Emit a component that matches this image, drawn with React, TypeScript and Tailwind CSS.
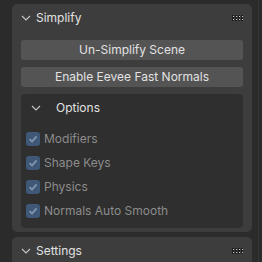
import React from "react";

const font = { fontFamily: 'Inter, "Liberation Sans", sans-serif' };

function Chevron() {
  return (
    <svg width="10" height="6" viewBox="0 0 10 6">
      <path d="M1 1 L5 5 L9 1" fill="none" stroke="#c8c8c8" strokeWidth="1.1" />
    </svg>
  );
}

function Grip() {
  const xs = [1, 4, 7, 10];
  const ys = [1, 4];
  return (
    <svg width="12" height="7" viewBox="0 0 12 7">
      {ys.map((y) =>
        xs.map((x) => (
          <g key={`${x}-${y}`}>
            <rect x={x - 1} y={y - 1} width="2" height="3" fill="#1e1e1e" />
            <rect x={x} y={y} width="1" height="1" fill="#d0d0d0" />
          </g>
        ))
      )}
    </svg>
  );
}

function Check({ label }: { label: string }) {
  return (
    <div className="flex h-6 items-center pl-[5px]">
      <span className="flex h-[14px] w-[14px] items-center justify-center rounded-[3px] bg-[#3f5878]">
        <svg width="10" height="10" viewBox="0 0 10 10">
          <path d="M1.5 5.2 L4 7.6 L8.6 2.4" fill="none" stroke="#8797ad" strokeWidth="1.6" />
        </svg>
      </span>
      <span className="ml-[4px] text-[12px] text-[#8c8c8c]">{label}</span>
    </div>
  );
}

export default function App() {
  return (
    <div className="relative h-[262px] w-[262px] overflow-hidden bg-[#2b2b2b]" style={font}>
      <div className="pl-3 pt-1">
        {/* Simplify panel */}
        <div className="w-[240px] rounded-[5px] bg-[#3d3d3d] pb-1">
          <div className="flex h-7 items-center px-[9px]">
            <Chevron />
            <span className="ml-[5px] text-[12px] text-[#e2e2e2]">Simplify</span>
            <span className="ml-auto -mr-[1px]">
              <Grip />
            </span>
          </div>
          <div className="flex flex-col gap-[7px] px-[9px] pt-2">
            <button className="h-5 rounded-[3px] bg-[#545454] text-[12px] text-[#e2e2e2]">
              Un-Simplify Scene
            </button>
            <button className="h-5 rounded-[3px] bg-[#545454] text-[12px] text-[#e2e2e2]">
              Enable Eevee Fast Normals
            </button>
            {/* Options sub-panel */}
            <div className="rounded-[4px] bg-[#2f2f2f] pb-[5px]">
              <div className="flex h-7 items-center pl-[10px]">
                <Chevron />
                <span className="ml-[15px] text-[12px] text-[#e2e2e2]">Options</span>
              </div>
              <div className="pt-[5px]">
                <Check label="Modifiers" />
                <Check label="Shape Keys" />
                <Check label="Physics" />
                <Check label="Normals Auto Smooth" />
              </div>
            </div>
          </div>
        </div>
        {/* Settings panel */}
        <div className="mt-[5px] h-9 w-[240px] rounded-[5px] bg-[#3d3d3d]">
          <div className="flex h-7 items-center px-[9px]">
            <Chevron />
            <span className="ml-[5px] text-[12px] text-[#e2e2e2]">Settings</span>
            <span className="ml-auto -mr-[1px]">
              <Grip />
            </span>
          </div>
        </div>
      </div>
      <div className="absolute right-[3px] top-0 h-full w-px bg-[#353535]" />
    </div>
  );
}
